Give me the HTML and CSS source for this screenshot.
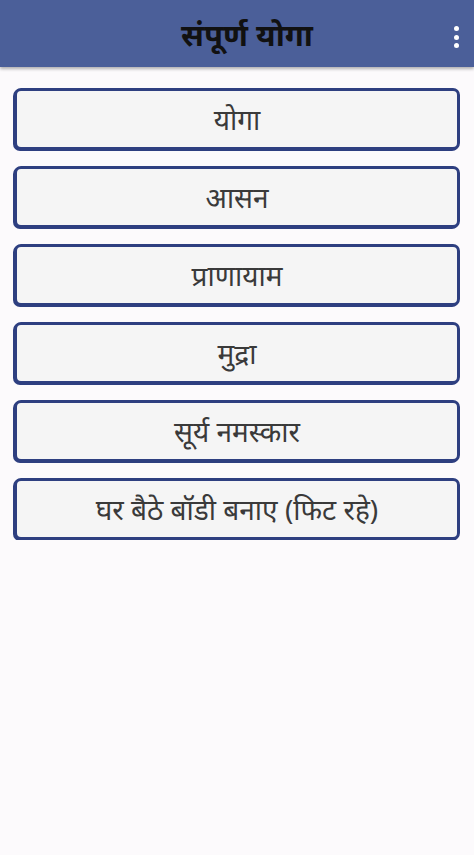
FILE: index.html
```html
<!DOCTYPE html>
<html lang="hi">
<head>
<meta charset="UTF-8" />
<title>संपूर्ण योगा</title>
<link rel="stylesheet" href="styles.css">
</head>
<body>

<div class="toolbar">
  <h1 class="title">संपूर्ण योगा</h1>
  <button class="menu" aria-label="menu">
    <span></span><span></span><span></span>
  </button>
</div>

<div class="list">
  <button class="item">योगा</button>
  <button class="item">आसन</button>
  <button class="item">प्राणायाम</button>
  <button class="item">मुद्रा</button>
  <button class="item">सूर्य नमस्कार</button>
  <button class="item">घर बैठे बॉडी बनाए (फिट रहे)</button>
</div>

</body>
</html>
```

FILE: styles.css
```css
body {
  margin: 0;
  background: #fcfafc;
  font-family: "Noto Sans", "Noto Sans Devanagari", "Lohit Devanagari", sans-serif;
}
.toolbar {
  height: 67px;
  background: #4b5f99;
  box-shadow: 0 2px 3px rgba(0, 0, 0, 0.3);
  display: flex;
  align-items: center;
  justify-content: center;
  position: relative;
}
.title {
  margin: 0 0 0 20px;
  font-size: 31px;
  font-weight: bold;
  color: #111;
}
.menu {
  position: absolute;
  right: 12px;
  top: 26px;
  width: 12px;
  height: 22px;
  padding: 0;
  border: none;
  background: none;
  display: flex;
  flex-direction: column;
  align-items: center;
  justify-content: space-between;
}
.menu span {
  width: 5px;
  height: 5px;
  border-radius: 50%;
  background: #fff;
}
.list {
  padding: 21px 14px 0 14px;
  display: flex;
  flex-direction: column;
  gap: 16px;
}
.item {
  height: 62px;
  border: 3px solid #2e3f80;
  border-radius: 7px;
  background: #f5f5f5;
  box-shadow: -1px 1px 0 #2e3f80;
  font-family: inherit;
  font-size: 28px;
  color: #3a3a3a;
  cursor: pointer;
}
```
